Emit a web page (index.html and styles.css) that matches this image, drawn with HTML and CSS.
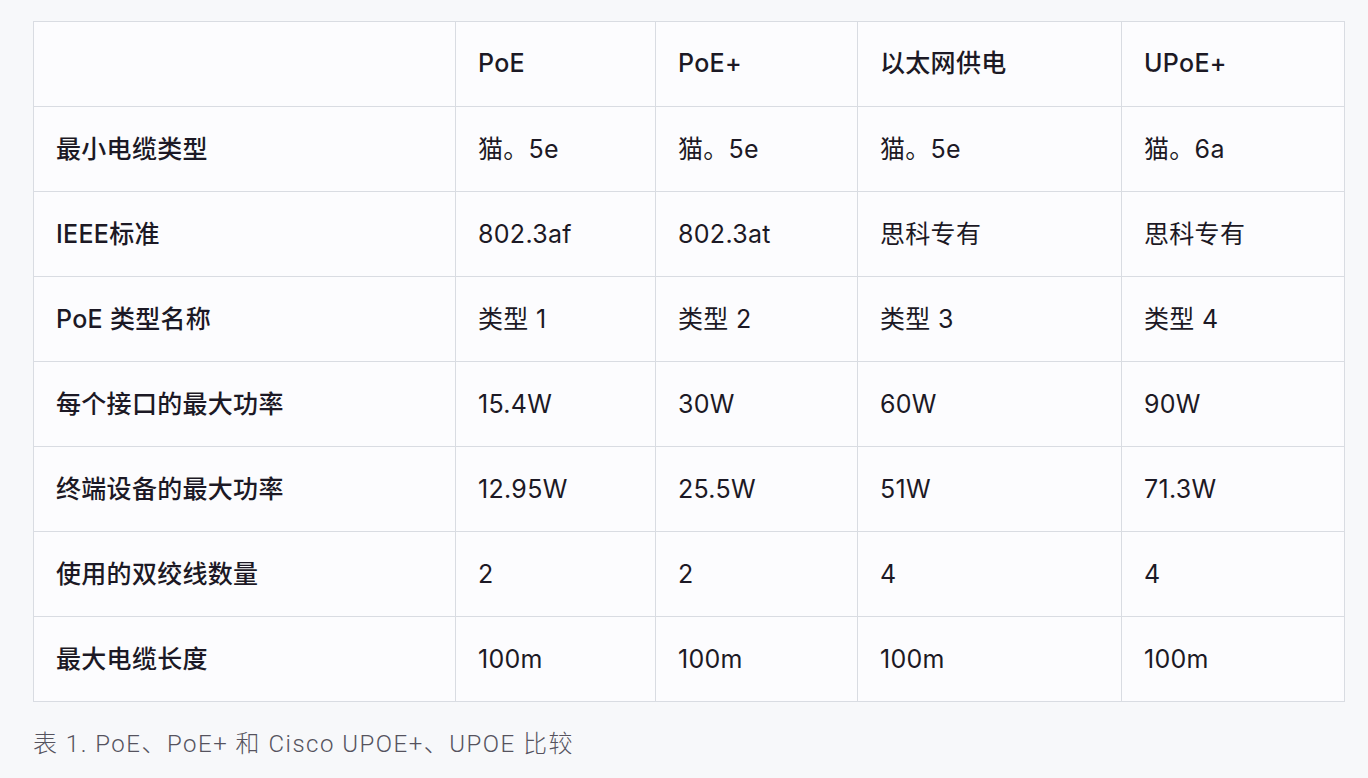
FILE: index.html
```html
<!DOCTYPE html>
<html lang="zh-CN">
<head>
<meta charset="utf-8">
<title>PoE 比较</title>
<link rel="stylesheet" href="styles.css">
</head>
<body>
<div class="page">
  <table class="cmp">
    <colgroup>
      <col class="c-label">
      <col class="c-poe">
      <col class="c-poeplus">
      <col class="c-eth">
      <col class="c-upoe">
    </colgroup>
    <thead>
      <tr>
        <th></th>
        <th>PoE</th>
        <th>PoE+</th>
        <th>以太网供电</th>
        <th>UPoE+</th>
      </tr>
    </thead>
    <tbody>
      <tr><th>最小电缆类型</th><td>猫。5e</td><td>猫。5e</td><td>猫。5e</td><td>猫。6a</td></tr>
      <tr><th>IEEE标准</th><td>802.3af</td><td>802.3at</td><td>思科专有</td><td>思科专有</td></tr>
      <tr><th>PoE 类型名称</th><td>类型 1</td><td>类型 2</td><td>类型 3</td><td>类型 4</td></tr>
      <tr><th>每个接口的最大功率</th><td>15.4W</td><td>30W</td><td>60W</td><td>90W</td></tr>
      <tr><th>终端设备的最大功率</th><td>12.95W</td><td>25.5W</td><td>51W</td><td>71.3W</td></tr>
      <tr><th>使用的双绞线数量</th><td>2</td><td>2</td><td>4</td><td>4</td></tr>
      <tr><th>最大电缆长度</th><td>100m</td><td>100m</td><td>100m</td><td>100m</td></tr>
    </tbody>
  </table>
  <p class="caption">表 1. PoE、PoE+ 和 Cisco UPOE+、UPOE 比较</p>
</div>
</body>
</html>
```

FILE: styles.css
```css
html, body {
  margin: 0;
  padding: 0;
  background: #f7f8fa;
}

.page {
  padding: 21px 0 0 33px;
  font-family: "Inter", "Noto Sans CJK SC", sans-serif;
  color: #1c1925;
}

.cmp {
  width: 1311px;
  border-collapse: collapse;
  table-layout: fixed;
  background: #fcfcfe;
  font-size: 25px;
}

.c-label { width: 422px; }
.c-poe { width: 200px; }
.c-poeplus { width: 202px; }
.c-eth { width: 264px; }
.c-upoe { width: 223px; }

.cmp th,
.cmp td {
  box-sizing: border-box;
  height: 85px;
  padding: 0 0 0 22px;
  border: 1px solid #d9dce2;
  text-align: left;
  vertical-align: middle;
  white-space: nowrap;
  line-height: 30px;
}

.cmp thead th {
  padding-bottom: 3px;
}

.cmp th {
  font-weight: 500;
  letter-spacing: 0.3px;
}

.cmp td {
  font-weight: 400;
  letter-spacing: 0.3px;
}

.caption {
  margin: 27px 0 0 0;
  font-family: "Roboto", "Noto Sans CJK SC", sans-serif;
  font-size: 24px;
  line-height: 30px;
  font-weight: 300;
  letter-spacing: 1.5px;
  color: #55535e;
}
```
